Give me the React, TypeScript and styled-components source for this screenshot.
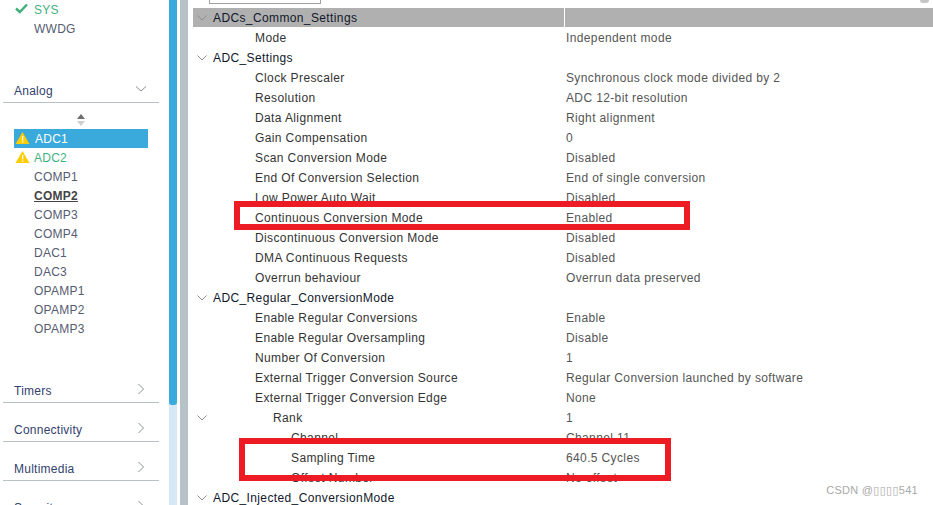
import React from 'react';
import styled, { createGlobalStyle } from 'styled-components';

const GlobalStyle = createGlobalStyle`
  html, body {
    margin: 0;
    padding: 0;
    background: #fff;
  }
`;

const Page = styled.div`
  position: relative;
  display: flex;
  width: 933px;
  height: 505px;
  overflow: hidden;
  background: #fff;
  font-family: "Liberation Sans", Arial, sans-serif;
  font-size: 12px;
`;

const Sidebar = styled.aside`
  width: 169px;
  flex: none;
  box-sizing: border-box;
  padding: 0 10px 0 3px;
`;

const TopList = styled.div`
  padding: 0 0 0 11px;
  height: 82px;
`;

const ListRow = styled.div<{ $color: string; $bold?: boolean }>`
  display: flex;
  align-items: center;
  height: 19px;
  padding-left: 20px;
  position: relative;
  color: ${p => p.$color};
  font-weight: ${p => (p.$bold ? 700 : 400)};
  text-decoration: ${p => (p.$bold ? 'underline' : 'none')};
  letter-spacing: 0.25px;
`;

const StatusIcon = styled.svg`
  position: absolute;
  left: 1px;
  top: 2px;
`;

const CheckIcon = styled.svg`
  position: absolute;
  left: 1px;
  top: 3px;
`;

const SectionHead = styled.div<{ $gap: number }>`
  display: flex;
  align-items: center;
  justify-content: space-between;
  box-sizing: border-box;
  height: 21px;
  margin-top: ${p => p.$gap}px;
  padding: 0 11px 2px;
  border-bottom: 1px solid #b9c1c5;
  color: #33416e;
  letter-spacing: 0.25px;
`;

const ChevronIcon = styled.svg`
  margin: 0 1px 5px 0;
`;

const SortArrows = styled.svg`
  display: block;
  margin: 11px 0 3px 73px;
`;

const Items = styled.div`
  margin: 0 11px;
  height: 248px;
  width: 134px;
`;

const SelectedRow = styled(ListRow)`
  background: #3aa9dc;
  padding-left: 21px;
`;

const ScrollTrack = styled.div`
  width: 8px;
  flex: none;
  background: #d6e8f6;
`;

const ScrollThumb = styled.div`
  height: 405px;
  background: #3aa9dc;
  border-radius: 0 0 3px 3px;
`;

const Divider = styled.div`
  width: 8px;
  flex: none;
  margin-left: 3px;
  background: #b6c2c8;
`;

const Panel = styled.main`
  flex: 1;
  margin-left: 5px;
  min-width: 0;
`;

const TopStrip = styled.div`
  height: 8px;
  display: flex;
  justify-content: space-between;
`;

const CutBox = styled.div`
  width: 110px;
  height: 3px;
  margin-left: 16px;
  border: 1px solid #a0a0a0;
  border-top: none;
`;

const CutKnob = styled.div`
  width: 9px;
  height: 3px;
  margin-right: 4px;
  border-radius: 0 0 5px 5px;
  background: #c4c4c4;
`;

const TreeRow = styled.div<{ $head?: boolean }>`
  display: grid;
  grid-template-columns: 371px 1fr;
  height: ${p => (p.$head ? 19 : 20)}px;
  margin-bottom: ${p => (p.$head ? 1 : 0)}px;
  align-items: center;
  background: ${p => (p.$head ? '#b0b0b0' : 'transparent')};
`;

const NameCell = styled.div<{ $indent: number; $group?: boolean }>`
  display: flex;
  align-items: center;
  height: 100%;
  padding-left: ${p => p.$indent}px;
  color: ${p => (p.$group ? '#10182a' : '#333')};
  letter-spacing: 0.38px;
  white-space: nowrap;
`;

const ValueCell = styled.div<{ $head?: boolean }>`
  display: flex;
  align-items: center;
  height: 100%;
  padding-left: 1px;
  color: #555;
  letter-spacing: 0.37px;
  white-space: nowrap;
  border-left: 1px solid ${p => (p.$head ? '#fff' : 'transparent')};
`;

const Twisty = styled.svg`
  flex: none;
  margin-right: 6px;
`;

const RankLabel = styled.span`
  margin-left: 60px;
`;

const Highlight = styled.div<{ $x: number; $y: number; $w: number; $h: number }>`
  position: absolute;
  left: ${p => p.$x}px;
  top: ${p => p.$y}px;
  width: ${p => p.$w}px;
  height: ${p => p.$h}px;
  box-sizing: border-box;
  border: 6px solid #ed1c24;
`;

const Watermark = styled.div`
  position: absolute;
  right: 15px;
  bottom: 8px;
  color: #a8a8a8;
  font-family: "Liberation Sans", "DejaVu Sans", sans-serif;
  font-size: 11px;
  letter-spacing: 0.3px;
`;

const Chevron = ({ open }: { open: boolean }) => (
  <ChevronIcon width="12" height="12" viewBox="0 0 12 12" fill="none" stroke="#8a8f92" strokeWidth="1">
    <path d={open ? 'M1 3.5 L6 8 L11 3.5' : 'M3.5 1 L8.5 6 L3.5 11'} />
  </ChevronIcon>
);

const Warning = () => (
  <StatusIcon width="15" height="14" viewBox="0 0 15 14">
    <path d="M7.5 1 L14.5 13 H0.5 Z" fill="#ffcc00" />
    <rect x="7" y="5" width="1.3" height="4.5" fill="#fff" />
    <rect x="7" y="10.3" width="1.3" height="1.4" fill="#fff" />
  </StatusIcon>
);

const Check = () => (
  <CheckIcon width="13" height="11" viewBox="0 0 13 11" fill="none" stroke="#3fae78" strokeWidth="2.4">
    <path d="M1 5.5 L4.8 9 L12 1.5" />
  </CheckIcon>
);

const analogItems = ['COMP1', 'COMP2', 'COMP3', 'COMP4', 'DAC1', 'DAC3', 'OPAMP1', 'OPAMP2', 'OPAMP3'];

type Row = { name: string; value?: string; level: number; open?: boolean; head?: boolean };

const rows: Row[] = [
  { name: 'ADCs_Common_Settings', level: 0, open: true, head: true },
  { name: 'Mode', value: 'Independent mode', level: 1 },
  { name: 'ADC_Settings', level: 0, open: true },
  { name: 'Clock Prescaler', value: 'Synchronous clock mode divided by 2', level: 1 },
  { name: 'Resolution', value: 'ADC 12-bit resolution', level: 1 },
  { name: 'Data Alignment', value: 'Right alignment', level: 1 },
  { name: 'Gain Compensation', value: '0', level: 1 },
  { name: 'Scan Conversion Mode', value: 'Disabled', level: 1 },
  { name: 'End Of Conversion Selection', value: 'End of single conversion', level: 1 },
  { name: 'Low Power Auto Wait', value: 'Disabled', level: 1 },
  { name: 'Continuous Conversion Mode', value: 'Enabled', level: 1 },
  { name: 'Discontinuous Conversion Mode', value: 'Disabled', level: 1 },
  { name: 'DMA Continuous Requests', value: 'Disabled', level: 1 },
  { name: 'Overrun behaviour', value: 'Overrun data preserved', level: 1 },
  { name: 'ADC_Regular_ConversionMode', level: 0, open: true },
  { name: 'Enable Regular Conversions', value: 'Enable', level: 1 },
  { name: 'Enable Regular Oversampling', value: 'Disable', level: 1 },
  { name: 'Number Of Conversion', value: '1', level: 1 },
  { name: 'External Trigger Conversion Source', value: 'Regular Conversion launched by software', level: 1 },
  { name: 'External Trigger Conversion Edge', value: 'None', level: 1 },
  { name: 'Rank', value: '1', level: 2, open: true },
  { name: 'Channel', value: 'Channel 11', level: 3 },
  { name: 'Sampling Time', value: '640.5 Cycles', level: 3 },
  { name: 'Offset Number', value: 'No offset', level: 3 },
  { name: 'ADC_Injected_ConversionMode', level: 0, open: true },
];

const indents = [4, 62, 4, 98];

export default function App() {
  return (
    <Page>
      <GlobalStyle />
      <Sidebar>
        <TopList>
          <ListRow $color="#3fb27f">
            <Check />
            SYS
          </ListRow>
          <ListRow $color="#555c70">WWDG</ListRow>
        </TopList>
        <SectionHead $gap={0}>
          Analog
          <Chevron open />
        </SectionHead>
        <SortArrows width="10" height="12" viewBox="0 0 10 12">
          <path d="M5 0 L9 5 H1 Z" fill="#6e6e6e" />
          <path d="M5 12 L9 7 H1 Z" fill="#cfcfcf" />
        </SortArrows>
        <Items>
          <SelectedRow $color="#fff">
            <Warning />
            ADC1
          </SelectedRow>
          <ListRow $color="#3fb27f">
            <Warning />
            ADC2
          </ListRow>
          {analogItems.map(item => (
            <ListRow key={item} $color={item === 'COMP2' ? '#444' : '#555c70'} $bold={item === 'COMP2'}>
              {item}
            </ListRow>
          ))}
        </Items>
        <SectionHead $gap={5}>
          Timers
          <Chevron open={false} />
        </SectionHead>
        <SectionHead $gap={18}>
          Connectivity
          <Chevron open={false} />
        </SectionHead>
        <SectionHead $gap={18}>
          Multimedia
          <Chevron open={false} />
        </SectionHead>
        <SectionHead $gap={18}>
          Security
          <Chevron open={false} />
        </SectionHead>
      </Sidebar>
      <ScrollTrack>
        <ScrollThumb />
      </ScrollTrack>
      <Divider />
      <Panel>
        <TopStrip>
          <CutBox />
          <CutKnob />
        </TopStrip>
        {rows.map(row => (
          <TreeRow key={row.name} $head={row.head}>
            <NameCell $indent={indents[row.level]} $group={row.level === 0}>
              {row.open && (
                <Twisty width="10" height="8" viewBox="0 0 10 8" fill="none" stroke="#8a8f92" strokeWidth="1">
                  <path d="M0.5 1.5 L5 6 L9.5 1.5" />
                </Twisty>
              )}
              {row.level === 2 ? <RankLabel>{row.name}</RankLabel> : row.name}
            </NameCell>
            <ValueCell $head={row.head}>{row.value}</ValueCell>
          </TreeRow>
        ))}
      </Panel>
      <Highlight $x={234} $y={201} $w={456} $h={29} />
      <Highlight $x={239} $y={438} $w={432} $h={43} />
      <Watermark>CSDN @▯▯▯▯541</Watermark>
    </Page>
  );
}
